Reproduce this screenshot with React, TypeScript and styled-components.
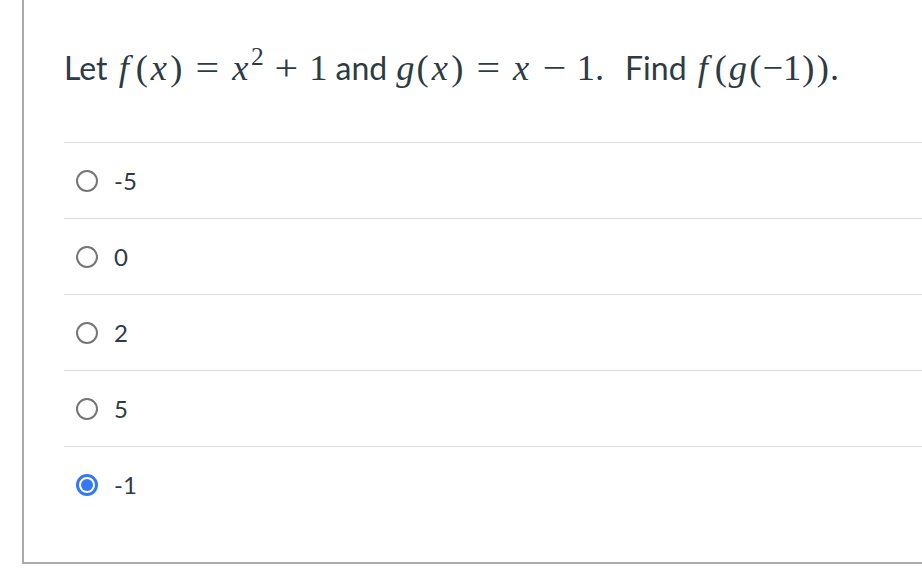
import React from "react";
import styled, { createGlobalStyle } from "styled-components";

const Global = createGlobalStyle`
  html, body { margin: 0; padding: 0; background: #ffffff; }
  body { font-family: Lato, "Open Sans", sans-serif; color: #2d3b45; }
`;

const Page = styled.div`
  width: 922px;
  height: 568px;
  overflow: hidden;
  padding-left: 22px;
  box-sizing: border-box;
`;

const Card = styled.div`
  border-left: 2px solid #aaaaaa;
  border-bottom: 2px solid #aaaaaa;
  height: 564px;
  box-sizing: border-box;
  padding: 38px 0 0 40px;
  display: flex;
  flex-direction: column;
`;

const Question = styled.div`
  font-size: 32px;
  line-height: 60px;
  height: 104px;
  white-space: nowrap;
`;

const Math = styled.span`
  font-family: "Liberation Serif", "Times New Roman", serif;
  font-size: 1.14em;
  color: #2d3b45;
`;

const Var = styled.i<{ $l?: number; $r?: number }>`
  font-style: italic;
  display: inline-block;
  margin-left: ${(p) => p.$l ?? 0}em;
  margin-right: ${(p) => p.$r ?? 0}em;
`;

const Paren = styled.span`
  display: inline-block;
  margin: 0 0.03em;
`;

const Op = styled.span<{ $space: number }>`
  display: inline-block;
  margin: 0 ${(p) => p.$space}em;
  transform: scaleX(1.15);
`;

const Sup = styled.span`
  font-size: 0.7em;
  display: inline-block;
  position: relative;
  top: -0.6em;
  margin-left: 0.02em;
`;

const Period = styled.span`
  margin-right: 0.35em;
`;

const Options = styled.div`
  display: flex;
  flex-direction: column;
`;

const Option = styled.label`
  display: flex;
  align-items: center;
  height: 75px;
  border-top: 1px solid #dddddd;
  padding-left: 12px;
  gap: 16px;
  font-size: 24px;
`;

const Radio = styled.span<{ $checked?: boolean }>`
  width: 22px;
  height: 22px;
  box-sizing: border-box;
  border-radius: 50%;
  border: ${(p) => (p.$checked ? "3px solid #3478f6" : "2px solid #767676")};
  display: flex;
  align-items: center;
  justify-content: center;
  flex-shrink: 0;
  &::after {
    content: "";
    display: ${(p) => (p.$checked ? "block" : "none")};
    width: 12px;
    height: 12px;
    border-radius: 50%;
    background: #3478f6;
  }
`;

const options = [
  { label: "-5", checked: false },
  { label: "0", checked: false },
  { label: "2", checked: false },
  { label: "5", checked: false },
  { label: "-1", checked: true },
];

const F = () => (
  <Var $l={0.08} $r={0.16}>
    f
  </Var>
);
const X = () => (
  <Var $l={0.05} $r={0.06}>
    x
  </Var>
);
const G = () => (
  <Var $l={0.02} $r={0.03}>
    g
  </Var>
);

export default function App() {
  return (
    <Page>
      <Global />
      <Card>
        <Question>
          Let{" "}
          <Math>
            <F />
            <Paren>(</Paren>
            <X />
            <Paren>)</Paren>
            <Op $space={0.36}>=</Op>
            <X />
            <Sup>2</Sup>
            <Op $space={0.34}>+</Op>1
          </Math>{" "}
          and{" "}
          <Math>
            <G />
            <Paren>(</Paren>
            <X />
            <Paren>)</Paren>
            <Op $space={0.36}>=</Op>
            <X />
            <Op $space={0.34}>−</Op>1<Period>.</Period>
          </Math>{" "}
          Find{" "}
          <Math>
            <F />
            <Paren>(</Paren>
            <G />
            <Paren>(</Paren>−1<Paren>)</Paren>
            <Paren>)</Paren>.
          </Math>
        </Question>
        <Options>
          {options.map((o) => (
            <Option key={o.label}>
              <Radio $checked={o.checked} />
              {o.label}
            </Option>
          ))}
        </Options>
      </Card>
    </Page>
  );
}
